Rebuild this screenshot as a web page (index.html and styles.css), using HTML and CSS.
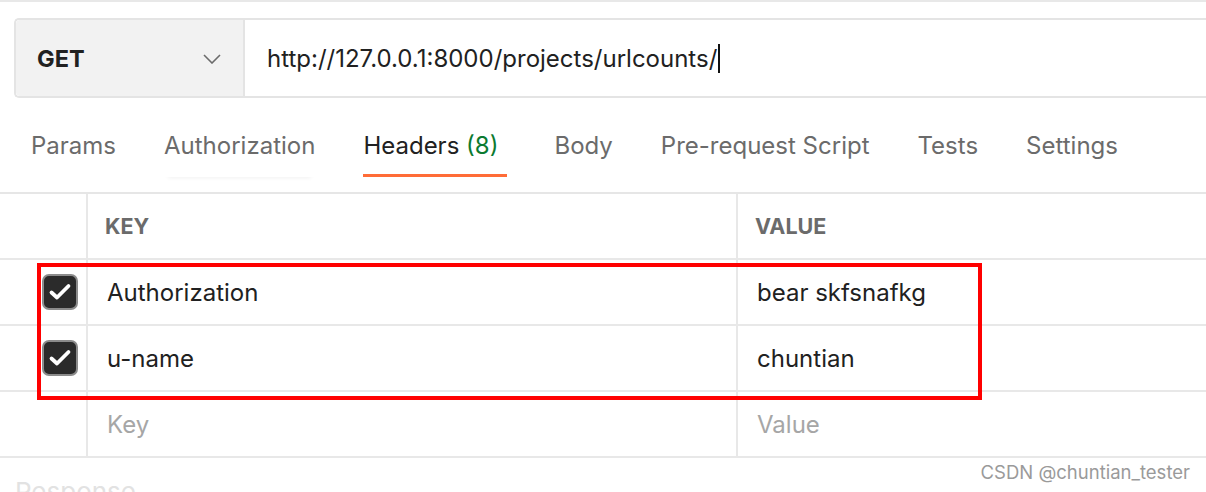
FILE: index.html
```html
<!DOCTYPE html>
<html>
<head>
<meta charset="utf-8">
<link rel="stylesheet" href="styles.css">
</head>
<body>
<div class="page">
  <div class="topline"></div>
  <div class="request">
    <div class="method">
      <span class="method-name">GET</span>
      <svg class="chevron" width="18" height="10" viewBox="0 0 18 10"><path d="M1 1 L9 9 L17 1" fill="none" stroke="#6b6b6b" stroke-width="1.6"/></svg>
    </div>
    <div class="url"><span>http://127.0.0.1:8000/projects/urlcounts/</span><span class="caret"></span></div>
  </div>
  <div class="tabs">
    <div class="tab">Params</div>
    <div class="tab tab-shadow">Authorization</div>
    <div class="tab active">Headers <span class="count">(8)</span></div>
    <div class="tab">Body</div>
    <div class="tab">Pre-request Script</div>
    <div class="tab">Tests</div>
    <div class="tab">Settings</div>
  </div>
  <div class="table">
    <div class="row head">
      <div class="cell check"></div>
      <div class="cell key">KEY</div>
      <div class="cell value">VALUE</div>
    </div>
    <div class="row">
      <div class="cell check"><svg width="36" height="36" viewBox="0 0 36 36"><rect x="1" y="1" width="34" height="34" rx="6" fill="#2b2b2b" stroke="#8c8c8c" stroke-width="2"/><path d="M9.5 18.5 L15 23.5 L26.5 12" fill="none" stroke="#fff" stroke-width="3.8" stroke-linecap="round" stroke-linejoin="round"/></svg></div>
      <div class="cell key">Authorization</div>
      <div class="cell value">bear skfsnafkg</div>
    </div>
    <div class="row">
      <div class="cell check"><svg width="36" height="36" viewBox="0 0 36 36"><rect x="1" y="1" width="34" height="34" rx="6" fill="#2b2b2b" stroke="#8c8c8c" stroke-width="2"/><path d="M9.5 18.5 L15 23.5 L26.5 12" fill="none" stroke="#fff" stroke-width="3.8" stroke-linecap="round" stroke-linejoin="round"/></svg></div>
      <div class="cell key">u-name</div>
      <div class="cell value">chuntian</div>
    </div>
    <div class="row">
      <div class="cell check"></div>
      <div class="cell key placeholder">Key</div>
      <div class="cell value placeholder">Value</div>
    </div>
    <div class="highlight"></div>
  </div>
  <div class="response">Response</div>
  <div class="watermark">CSDN @chuntian_tester</div>
</div>
</body>
</html>
```

FILE: styles.css
```css
* { box-sizing: border-box; }
html, body { margin: 0; padding: 0; background: #fff; }
body {
  font-family: Inter, "Noto Sans", sans-serif;
  color: #212121;
  width: 1206px;
  height: 492px;
  overflow: hidden;
}
.page { position: relative; width: 1206px; height: 492px; overflow: hidden; }
.topline { height: 2px; background: #e8e8e8; }
.request {
  display: flex;
  margin: 16px 0 0 14px;
  height: 80px;
  border: 2px solid #e4e4e4;
  border-right: none;
  border-radius: 5px 0 0 5px;
}
.method {
  width: 229px;
  flex: none;
  display: flex;
  align-items: center;
  justify-content: space-between;
  padding: 0 22px 0 21px;
  background: #f2f2f2;
  border-right: 2px solid #e4e4e4;
  border-radius: 4px 0 0 4px;
}
.method-name { font-size: 23.5px; font-weight: 700; color: #212121; }
.chevron { margin-top: 2px; }
.url {
  display: flex;
  align-items: center;
  padding-left: 22px;
  font-size: 24px;
  color: #212121;
}
.caret { display: inline-block; width: 2px; height: 29px; background: #111; margin-left: 1px; }
.tabs {
  display: flex;
  height: 94px;
  padding: 33px 0 0 31px;
  gap: 48px;
  align-items: flex-start;
}
.tab {
  font-size: 24px;
  line-height: 29px;
  color: #6b6b6b;
  padding-bottom: 14px;
  border-bottom: 3px solid transparent;
}
.tab-shadow { box-shadow: 0 5px 4px -4px rgba(0,0,0,0.06); }
.tab.active { color: #212121; border-bottom-color: #ff6c37; padding-right: 9px; margin-right: -1px; }
.count { color: #0b7a30; }
.table { position: relative; border-top: 2px solid #e6e6e6; }
.row {
  display: grid;
  grid-template-columns: 88px 650px 1fr;
  height: 66px;
  border-bottom: 2px solid #e8e8e8;
}
.cell {
  display: flex;
  align-items: center;
  font-size: 24px;
}
.cell.check { border-right: 2px solid #e8e8e8; justify-content: flex-start; padding-left: 42px; }
.cell.key { border-right: 2px solid #e8e8e8; padding-left: 19px; }
.cell.value { padding-left: 19px; }
.head .cell { font-size: 21.5px; font-weight: 700; color: #6b6b6b; }
.head .cell.key, .head .cell.value { padding-left: 17px; }
.placeholder { color: #a6a6a6; }
.highlight {
  position: absolute;
  left: 37px;
  top: 69px;
  width: 945px;
  height: 137px;
  border: 4px solid #ff0000;
}
.response {
  padding: 18px 0 0 15px;
  font-size: 26px;
  color: #e2e2e2;
}
.watermark {
  position: absolute;
  right: 16px;
  top: 461px;
  font-size: 18.5px;
  color: #9a9a9a;
}
```
